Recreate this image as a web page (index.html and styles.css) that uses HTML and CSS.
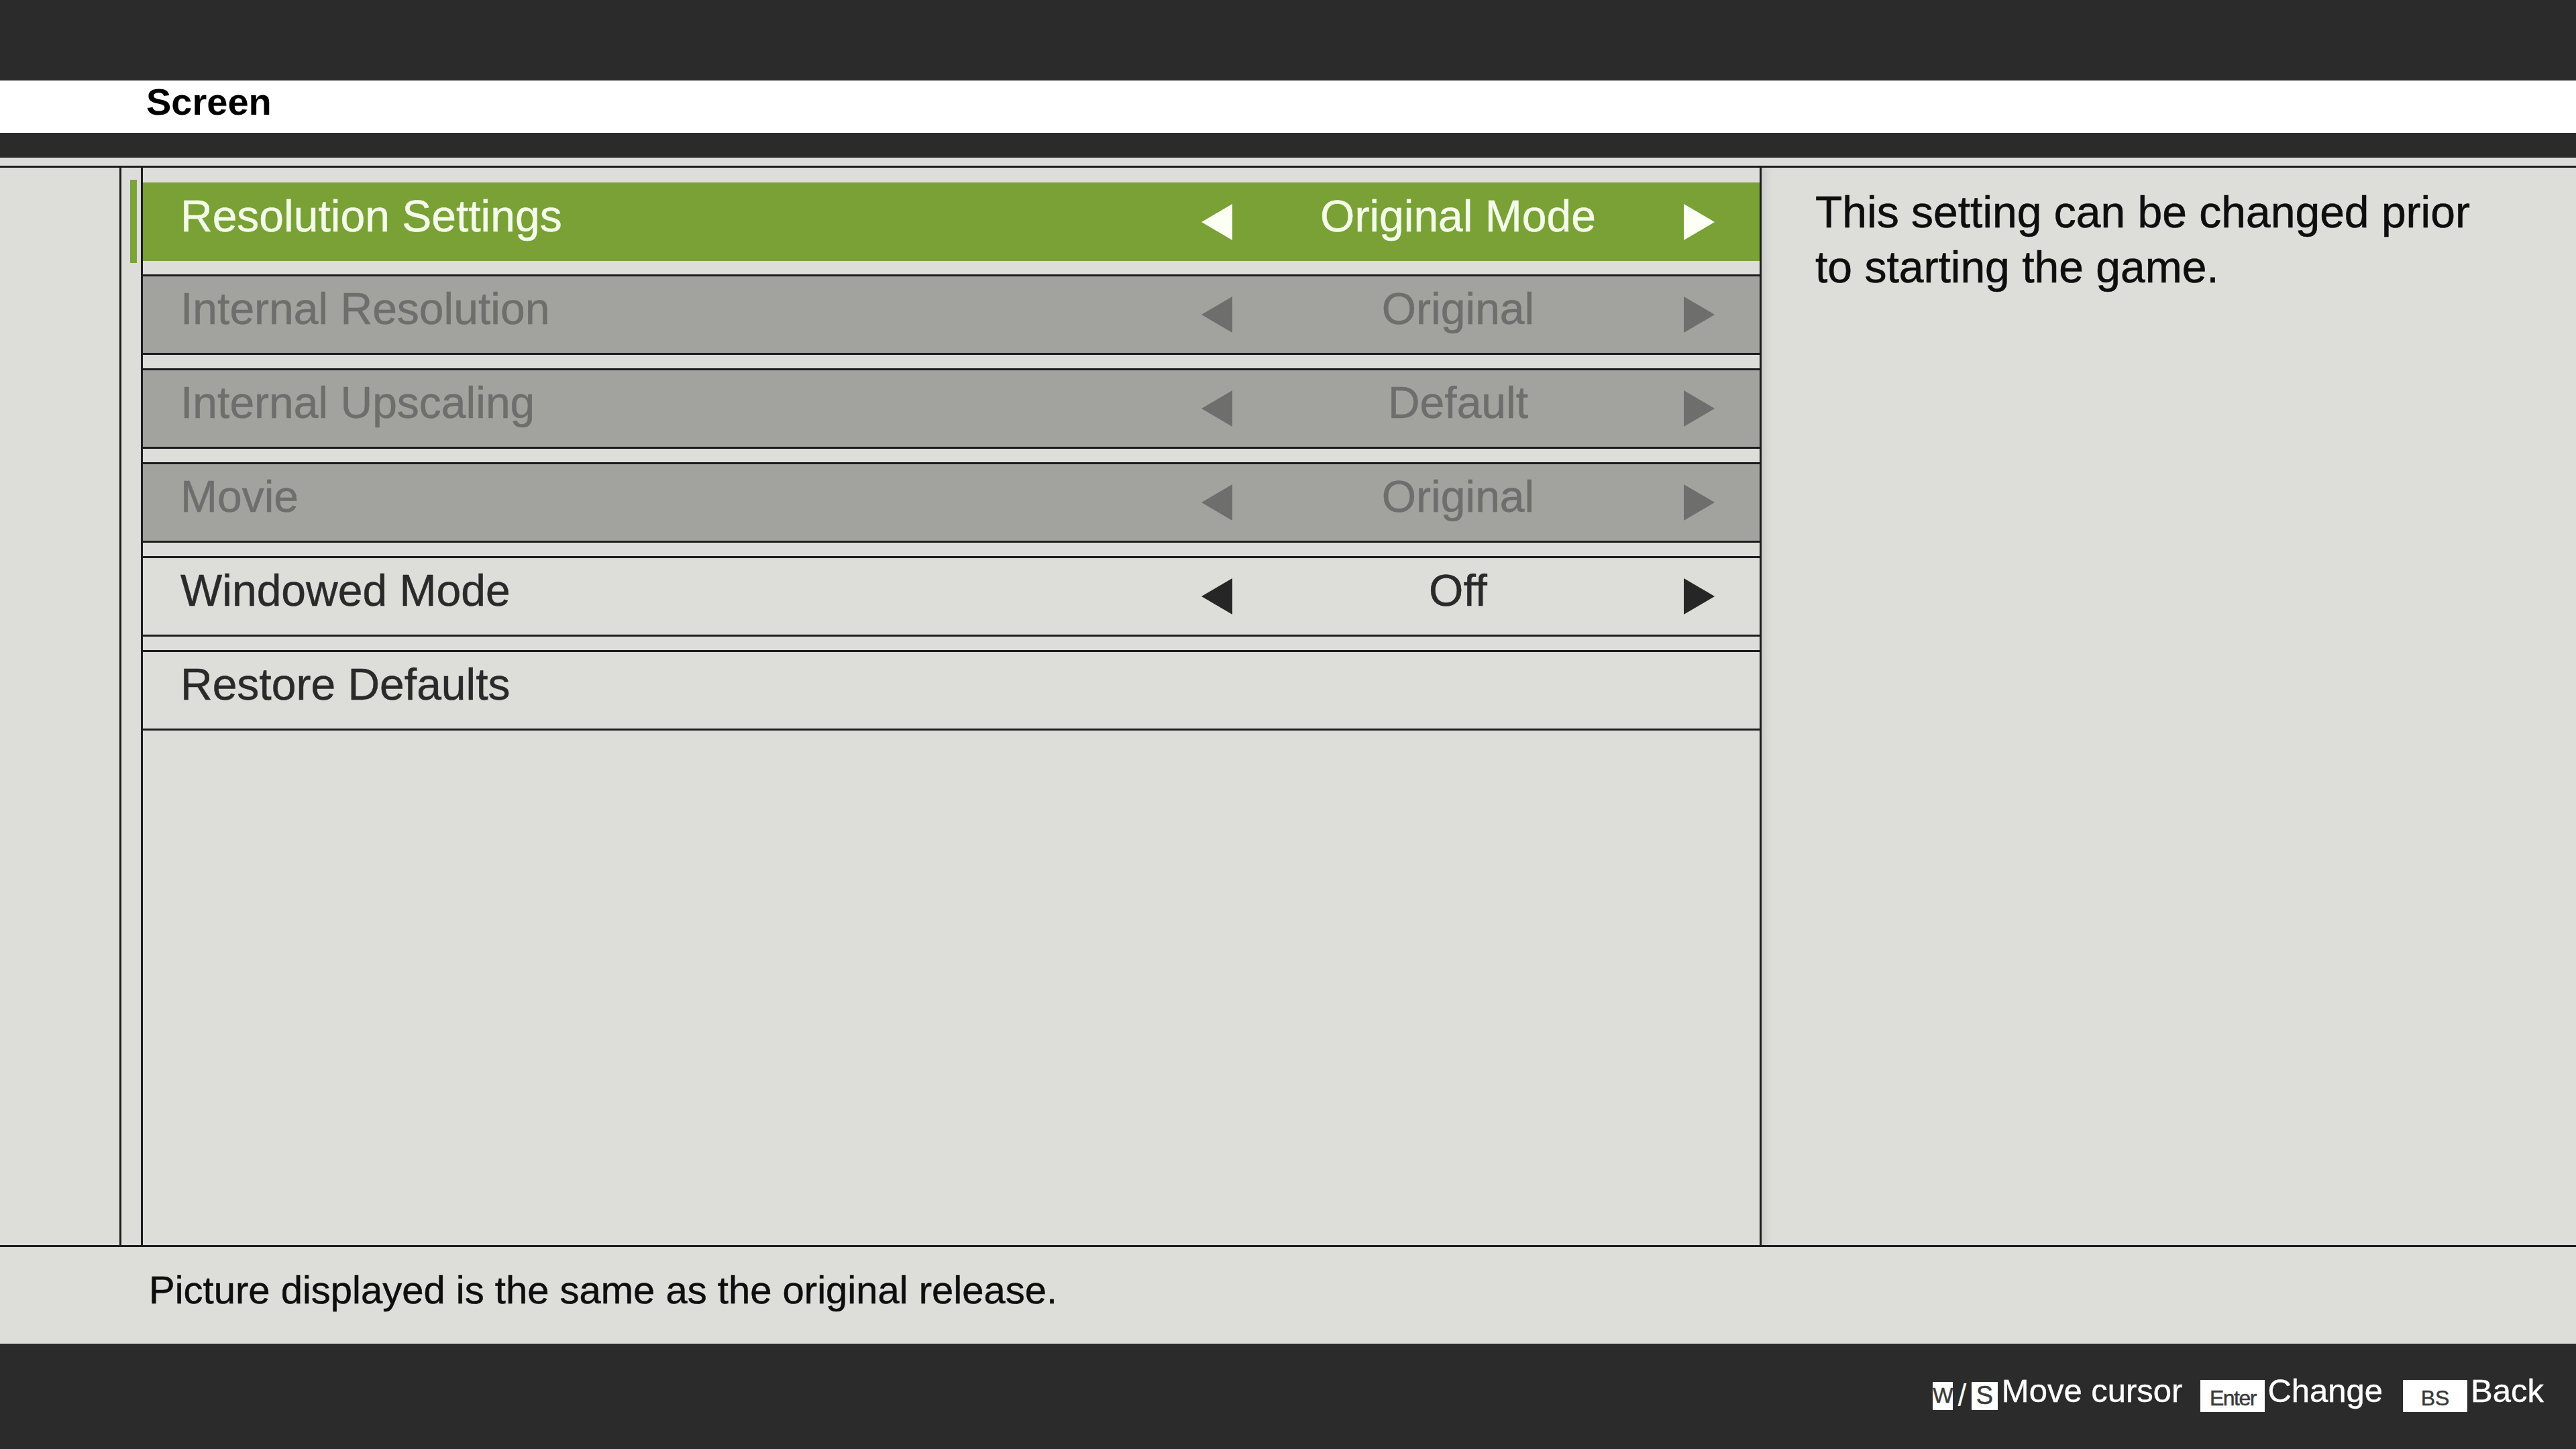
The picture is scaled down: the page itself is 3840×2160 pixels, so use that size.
FILE: index.html
```html
<!DOCTYPE html>
<html lang="en">
<head>
<meta charset="utf-8">
<title>Screen</title>
<link rel="stylesheet" href="styles.css">
</head>
<body>
<div class="app">
  <div class="topbar"></div>
  <div class="titlebar"><span class="title">Screen</span></div>
  <div class="subbar"></div>
  <div class="main">
    <div class="frame">
      <div class="col-left"></div>
      <div class="col-gutter"><div class="accent"></div></div>
      <div class="list">
        <div class="row selected">
          <span class="label">Resolution Settings</span>
          <div class="control">
            <svg class="arrow" viewBox="0 0 46 54" width="46" height="54"><polygon points="46,0 46,54 0,27"/></svg>
            <span class="value">Original Mode</span>
            <svg class="arrow" viewBox="0 0 46 54" width="46" height="54"><polygon points="0,0 0,54 46,27"/></svg>
          </div>
        </div>
        <div class="row disabled">
          <span class="label">Internal Resolution</span>
          <div class="control">
            <svg class="arrow" viewBox="0 0 46 54" width="46" height="54"><polygon points="46,0 46,54 0,27"/></svg>
            <span class="value">Original</span>
            <svg class="arrow" viewBox="0 0 46 54" width="46" height="54"><polygon points="0,0 0,54 46,27"/></svg>
          </div>
        </div>
        <div class="row disabled">
          <span class="label">Internal Upscaling</span>
          <div class="control">
            <svg class="arrow" viewBox="0 0 46 54" width="46" height="54"><polygon points="46,0 46,54 0,27"/></svg>
            <span class="value">Default</span>
            <svg class="arrow" viewBox="0 0 46 54" width="46" height="54"><polygon points="0,0 0,54 46,27"/></svg>
          </div>
        </div>
        <div class="row disabled">
          <span class="label">Movie</span>
          <div class="control">
            <svg class="arrow" viewBox="0 0 46 54" width="46" height="54"><polygon points="46,0 46,54 0,27"/></svg>
            <span class="value">Original</span>
            <svg class="arrow" viewBox="0 0 46 54" width="46" height="54"><polygon points="0,0 0,54 46,27"/></svg>
          </div>
        </div>
        <div class="row">
          <span class="label">Windowed Mode</span>
          <div class="control">
            <svg class="arrow" viewBox="0 0 46 54" width="46" height="54"><polygon points="46,0 46,54 0,27"/></svg>
            <span class="value">Off</span>
            <svg class="arrow" viewBox="0 0 46 54" width="46" height="54"><polygon points="0,0 0,54 46,27"/></svg>
          </div>
        </div>
        <div class="row">
          <span class="label">Restore Defaults</span>
        </div>
      </div>
      <div class="info">
        <p class="info-text">This setting can be changed prior to starting the game.</p>
      </div>
    </div>
  </div>
  <div class="footer">Picture displayed is the same as the original release.</div>
  <div class="hints">
    <span class="key key-w">W</span><span class="slash">/</span><span class="key key-s">S</span><span class="hint-text gap-move">Move cursor</span>
    <span class="key key-lg">Enter</span><span class="hint-text gap-change">Change</span>
    <span class="key key-lg key-bs">BS</span><span class="hint-text gap-back">Back</span>
  </div>
</div>
</body>
</html>
```

FILE: styles.css
```css
html, body {
  margin: 0;
  padding: 0;
  background: #2b2b2b;
}

body {
  font-family: "Liberation Sans", Arial, sans-serif;
}

.app {
  width: 3840px;
  height: 2160px;
  display: flex;
  flex-direction: column;
  overflow: hidden;
}

.topbar {
  flex: none;
  height: 120px;
  background: #2b2b2b;
}

.titlebar {
  flex: none;
  height: 78px;
  box-sizing: border-box;
  background: #ffffff;
  padding-left: 218px;
  display: flex;
  align-items: center;
}

.title {
  font-size: 56px;
  font-weight: bold;
  line-height: 64px;
  color: #000;
  margin-bottom: 14px;
}

.subbar {
  flex: none;
  height: 37px;
  background: #2b2b2b;
}

.main {
  flex: none;
  height: 1624px;
  box-sizing: border-box;
  padding-top: 12px;
  background: #dddeda;
  display: flex;
  flex-direction: column;
}

.frame {
  flex: 1;
  display: flex;
  border-top: 3px solid #1c1c1c;
  border-bottom: 3px solid #1c1c1c;
}

.col-left {
  flex: none;
  width: 178px;
  border-right: 3px solid #1c1c1c;
}

.col-gutter {
  flex: none;
  width: 29px;
  border-right: 3px solid #1c1c1c;
  padding-top: 18px;
}

.accent {
  margin-left: 13px;
  width: 10px;
  height: 124px;
  background: #7ba43a;
}

.list {
  flex: none;
  width: 2410px;
  border-right: 3px solid #1c1c1c;
  padding-top: 19px;
}

.row {
  height: 120px;
  box-sizing: border-box;
  border-top: 3px solid #1c1c1c;
  border-bottom: 3px solid #1c1c1c;
  margin-bottom: 20px;
  padding: 0 67px 0 56px;
  display: flex;
  align-items: center;
  font-size: 66px;
  color: #2a2a2a;
  -webkit-text-stroke: 0.5px currentColor;
}

.row .arrow {
  fill: #262626;
  flex: none;
}

.row.selected {
  border-top-color: transparent;
  border-bottom-width: 0;
  background: #79a136;
  background-clip: padding-box;
  color: #f4fbe9;
}

.row.selected .arrow {
  fill: #fbfff4;
}

.row.disabled {
  background: #a2a29f;
  color: #6e6e6c;
}

.row.disabled .arrow {
  fill: #6e6e6c;
}

.label {
  flex: 1;
  line-height: 76px;
  margin-bottom: 18px;
  white-space: nowrap;
}

.control {
  flex: none;
  width: 765px;
  display: flex;
  align-items: center;
}

.value {
  flex: 1;
  text-align: center;
  line-height: 76px;
  margin-bottom: 18px;
  white-space: nowrap;
}

.info {
  flex: 1;
  padding: 25px 0 0 80px;
  box-shadow: inset 14px 0 14px -10px rgba(0, 0, 0, 0.10);
}

.info-text {
  margin: 0;
  width: 1010px;
  font-size: 66px;
  line-height: 82px;
  color: #0e0e0e;
  -webkit-text-stroke: 0.6px currentColor;
}

.footer {
  flex: none;
  height: 144px;
  box-sizing: border-box;
  background: #dddeda;
  padding: 31px 0 0 222px;
  font-size: 58px;
  line-height: 1.15;
  color: #0e0e0e;
  -webkit-text-stroke: 0.5px currentColor;
}

.hints {
  flex: 1;
  background: #2b2b2b;
  display: flex;
  justify-content: flex-end;
  align-items: flex-start;
  padding: 54px 48px 0 0;
}

.key {
  flex: none;
  background: #ffffff;
  color: #3a3a3a;
  display: flex;
  justify-content: center;
  align-items: flex-end;
  box-sizing: border-box;
  -webkit-text-stroke: 0.5px currentColor;
}

.key-w,
.key-s {
  height: 42px;
  margin-top: 3px;
  font-size: 38px;
  line-height: 38px;
  padding-bottom: 3px;
}

.key-w {
  width: 30px;
  font-size: 32px;
  line-height: 32px;
  padding-bottom: 6px;
  letter-spacing: -1px;
}

.key-s {
  width: 39px;
}

.key-lg {
  height: 48px;
  width: 96px;
  font-size: 32px;
  line-height: 32px;
  padding-bottom: 5px;
  letter-spacing: -1.5px;
}

.key-bs {
  width: 96px;
  letter-spacing: 0;
}

.slash {
  flex: none;
  width: 28px;
  text-align: center;
  color: #ffffff;
  font-size: 46px;
  line-height: 44px;
  margin-top: 1px;
}

.hint-text {
  flex: none;
  color: #ffffff;
  font-size: 49px;
  line-height: 48px;
  margin-top: -8px;
  white-space: nowrap;
  -webkit-text-stroke: 0.4px currentColor;
}

.gap-move {
  margin-left: 6px;
  margin-right: 27px;
}

.gap-change {
  margin-left: 4px;
  margin-right: 30px;
}

.gap-back {
  margin-left: 5px;
}
```
